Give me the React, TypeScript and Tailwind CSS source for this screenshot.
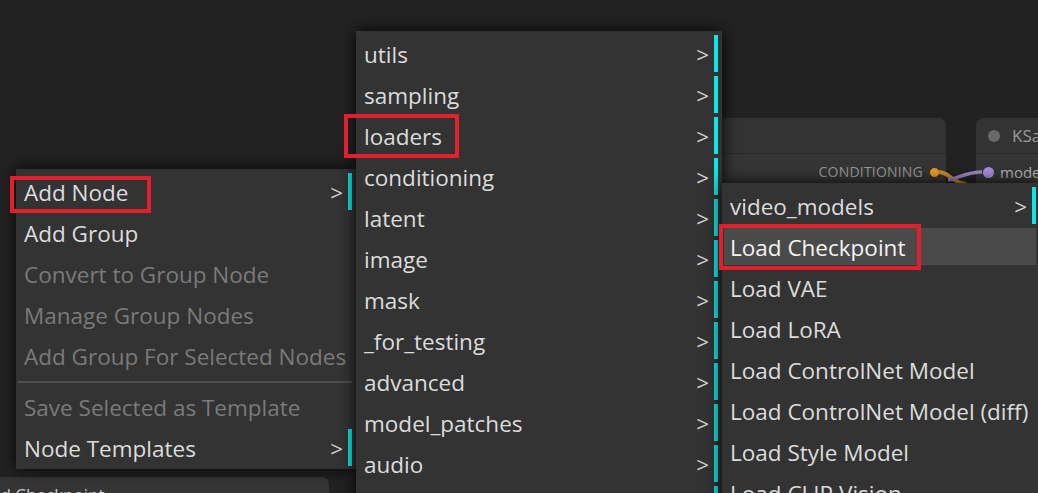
import React from "react";

type EntryProps = {
  label: string;
  sub?: boolean;
  disabled?: boolean;
  hl?: boolean;
};

function Entry({ label, sub, disabled, hl }: EntryProps) {
  return (
    <div
      className={`h-[37px] shrink-0 flex items-center pl-[6px] pt-[4px] border-r-4 ${
        sub ? "border-[#0ee6e6]" : "border-transparent"
      } ${hl ? "bg-[#4a4a4a] text-[#f4f4f4]" : ""} ${
        disabled ? "text-[#7a7a7a]" : hl ? "" : "text-[#dcdcdc]"
      }`}
    >
      <span className="flex-1 whitespace-nowrap leading-[1.35]">{label}</span>
      {sub && <span className="pr-[5px] text-[#cfcfcf] leading-[1.35]">&gt;</span>}
    </div>
  );
}

function Separator() {
  return <div className="h-[2px] mt-[3px] mb-[1px] bg-[#4f4f4f] shrink-0" />;
}

export default function App() {
  return (
    <div className="relative w-[1038px] h-[493px] overflow-hidden bg-[#222222] font-['Open_Sans',sans-serif] text-[22.5px] leading-none">
      {/* canvas nodes */}
      <div className="absolute left-[380px] top-[118px] w-[566px] h-[120px] rounded-[8px] bg-[#353535] overflow-hidden">
        <div className="h-[36px] bg-[#333333] border-b border-[#2a2a2a]" />
        <div className="flex items-center justify-end h-[36px] pr-[6px] gap-[6px]">
          <span className="text-[14px] text-[#9a9a9a] tracking-[0.2px]">CONDITIONING</span>
          <span className="w-[11px] h-[11px] rounded-full bg-[#e89a2a] border border-[#3a2a10]" />
        </div>
      </div>
      <div className="absolute left-[976px] top-[118px] w-[200px] h-[120px] rounded-[8px] bg-[#353535] overflow-hidden">
        <div className="h-[36px] bg-[#333333] border-b border-[#2a2a2a] flex items-center pl-[12px] gap-[12px]">
          <span className="w-[12px] h-[12px] rounded-full bg-[#6a6a6a]" />
          <span className="text-[17px] text-[#9a9a9a]">KSampler</span>
        </div>
        <div className="flex items-center h-[36px] pl-[7px] gap-[6px]">
          <span className="w-[11px] h-[11px] rounded-full bg-[#a48fd6]" />
          <span className="text-[15px] text-[#b5b5b5]">model</span>
        </div>
      </div>
      <svg className="absolute left-[936px] top-[160px]" width="50" height="30" viewBox="0 0 50 30">
        <path d="M2 12 C 14 12, 14 22, 30 24" stroke="#c98a2a" strokeWidth="4" fill="none" />
        <path d="M12 20 C 24 18, 30 12, 46 12" stroke="#9a86c8" strokeWidth="3.5" fill="none" />
      </svg>
      <div className="absolute left-[-120px] top-[477px] w-[449px] h-[80px] rounded-tr-[8px] bg-[#353535]">
        <div className="pl-[92px] pt-[9px] text-[17px] text-[#cfcfcf]">Load Checkpoint</div>
      </div>

      {/* Menu 1 */}
      <div className="absolute left-[16px] top-[169px] w-[340px] flex flex-col gap-[4px] pt-[4px] pb-[3px] pl-[2px] pr-[4px] bg-[#333333] shadow-[0_0_15px_rgba(0,0,0,0.9)]">
        <Entry label="Add Node" sub />
        <Entry label="Add Group" />
        <Entry label="Convert to Group Node" disabled />
        <Entry label="Manage Group Nodes" disabled />
        <Entry label="Add Group For Selected Nodes" disabled />
        <Separator />
        <Entry label="Save Selected as Template" disabled />
        <Entry label="Node Templates" sub />
      </div>

      {/* Menu 2 */}
      <div className="absolute left-[356px] top-[31px] w-[366px] flex flex-col gap-[4px] pt-[4px] pb-[3px] pl-[2px] pr-[4px] bg-[#333333] shadow-[0_0_15px_rgba(0,0,0,0.9)]">
        <Entry label="utils" sub />
        <Entry label="sampling" sub />
        <Entry label="loaders" sub />
        <Entry label="conditioning" sub />
        <Entry label="latent" sub />
        <Entry label="image" sub />
        <Entry label="mask" sub />
        <Entry label="_for_testing" sub />
        <Entry label="advanced" sub />
        <Entry label="model_patches" sub />
        <Entry label="audio" sub />
        <Entry label="3d" sub />
      </div>

      {/* Menu 3 */}
      <div className="absolute left-[722px] top-[183px] w-[318px] flex flex-col gap-[4px] pt-[4px] pb-[3px] pl-[2px] pr-[4px] bg-[#333333] shadow-[0_0_15px_rgba(0,0,0,0.9)]">
        <Entry label="video_models" sub />
        <Entry label="Load Checkpoint" hl />
        <Entry label="Load VAE" />
        <Entry label="Load LoRA" />
        <Entry label="Load ControlNet Model" />
        <Entry label="Load ControlNet Model (diff)" />
        <Entry label="Load Style Model" />
        <Entry label="Load CLIP Vision" />
      </div>

      {/* annotation boxes */}
      <div className="absolute left-[10px] top-[176px] w-[141px] h-[37px] border-4 border-[#e21f2b]" />
      <div className="absolute left-[344px] top-[114px] w-[115px] h-[44px] border-4 border-[#e21f2b]" />
      <div className="absolute left-[719px] top-[224px] w-[202px] h-[46px] border-4 border-[#e21f2b]" />
    </div>
  );
}
